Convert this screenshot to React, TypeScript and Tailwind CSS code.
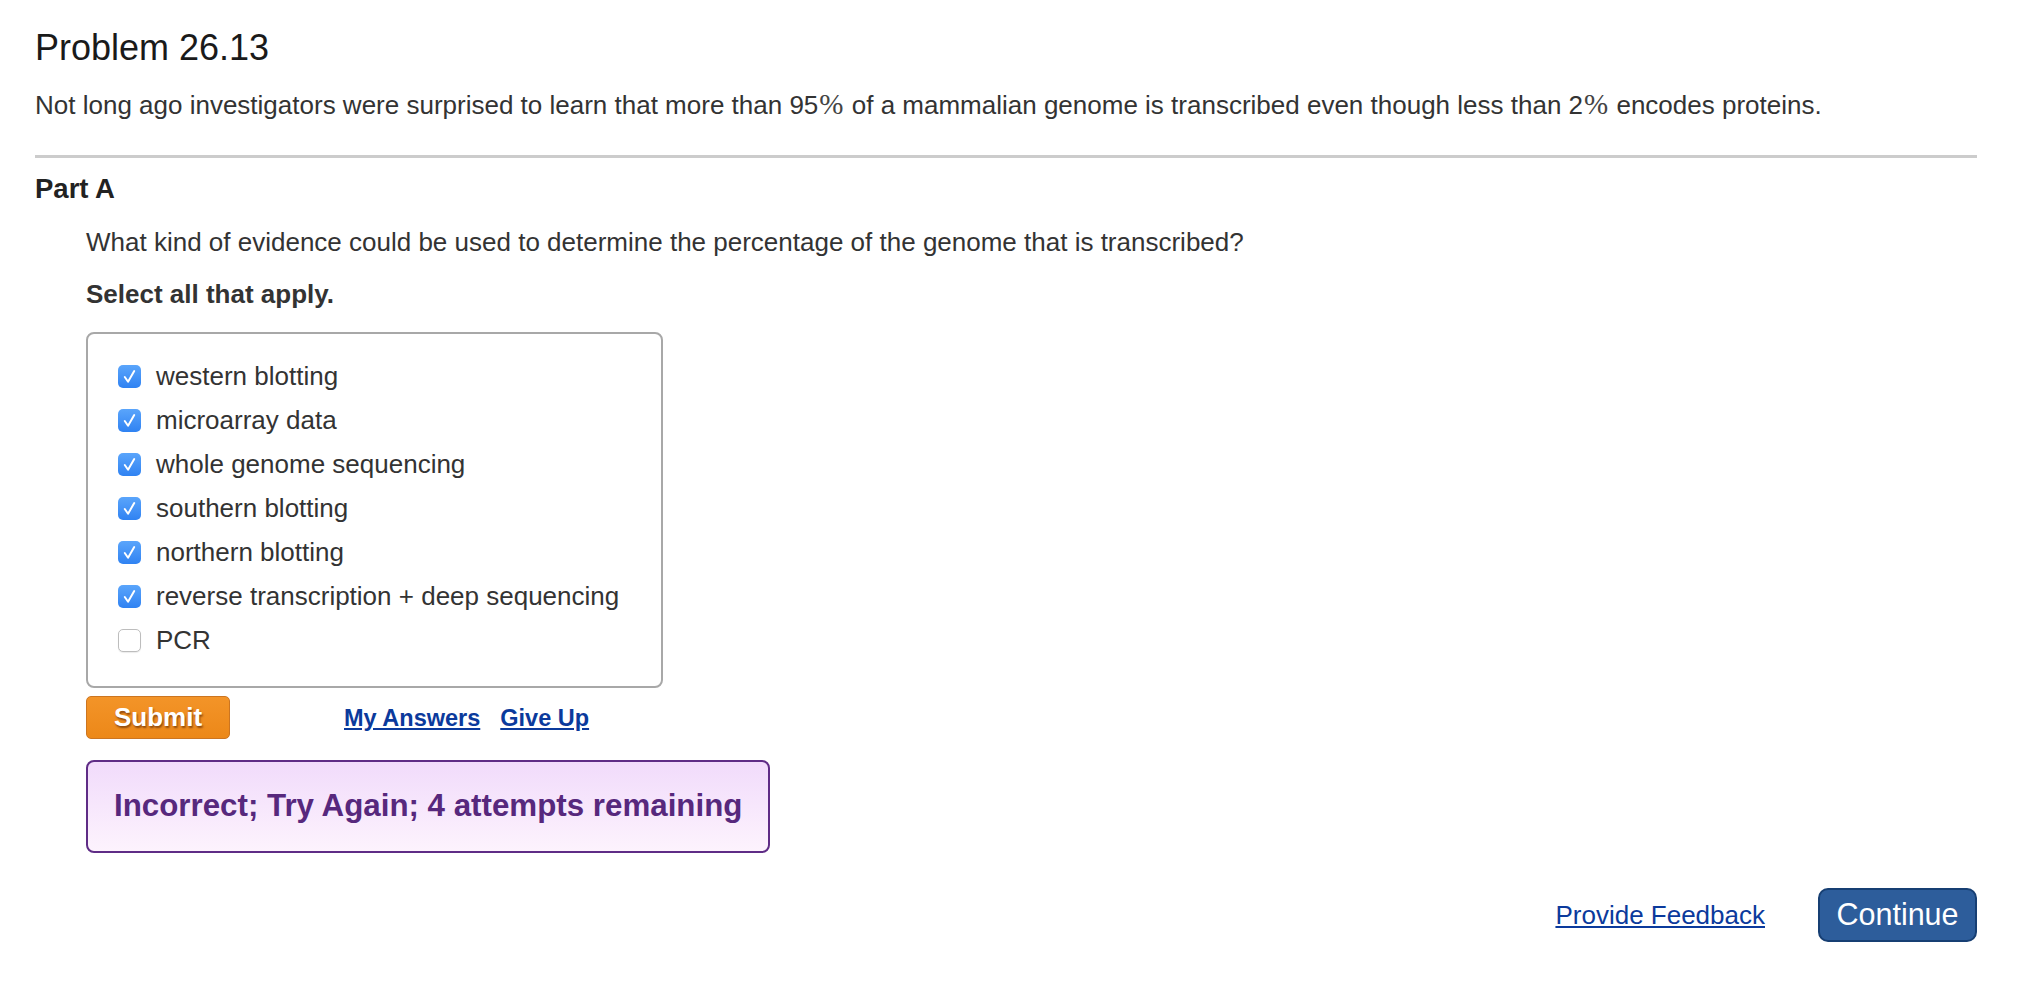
import { useState } from 'react';

const options = [
  { label: 'western blotting', checked: true },
  { label: 'microarray data', checked: true },
  { label: 'whole genome sequencing', checked: true },
  { label: 'southern blotting', checked: true },
  { label: 'northern blotting', checked: true },
  { label: 'reverse transcription + deep sequencing', checked: true },
  { label: 'PCR', checked: false },
];

const Pct = () => (
  <span className="mx-[1px] text-[29px] font-['Liberation_Serif',serif] leading-none text-[#444]">%</span>
);

const Box = ({ checked }: { checked: boolean }) =>
  checked ? (
    <span className="flex h-[23px] w-[23px] items-center justify-center rounded-[5px] bg-gradient-to-b from-[#5aa5fb] to-[#2f82f2]">
      <svg viewBox="0 0 16 16" className="h-[21px] w-[21px]">
        <path d="M4.4 8.4 L6.9 12 L11.6 3.9" fill="none" stroke="#fff" strokeWidth="1.5" strokeLinecap="round" strokeLinejoin="round" />
      </svg>
    </span>
  ) : (
    <span className="h-[23px] w-[23px] rounded-[5px] border border-[#bdbdbd] bg-white shadow-[0_1px_1px_rgba(0,0,0,0.08)]" />
  );

export default function App() {
  const [items, setItems] = useState(options);

  const toggle = (i: number) =>
    setItems(items.map((it, idx) => (idx === i ? { ...it, checked: !it.checked } : it)));

  return (
    <div className="min-h-screen bg-white pl-[35px] pr-[45px] pt-[28px] font-['Liberation_Sans',Arial,sans-serif] text-[#333]">
      <h1 className="text-[36px] leading-[40px] text-[#1a1a1a]">Problem 26.13</h1>
      <p className="mt-[19px] text-[26px] leading-[36px]">
        Not long ago investigators were surprised to learn that more than 95<Pct /> of a mammalian genome is
        transcribed even though less than 2<Pct /> encodes proteins.
      </p>
      <div className="mt-[32px] h-[3px] bg-[#cccccc]" />

      <h2 className="mt-[15px] text-[27.5px] font-bold leading-[32px] text-[#222]">Part A</h2>

      <div className="pl-[51px]">
        <p className="mt-[19px] text-[26px] leading-[36px]">
          What kind of evidence could be used to determine the percentage of the genome that is transcribed?
        </p>
        <p className="mt-[16px] text-[26px] font-bold leading-[36px]">Select all that apply.</p>

        <div className="mt-[20px] w-[577px] rounded-[8px] border-2 border-[#a8a8a8] pb-[24px] pl-[30px] pt-[20px]">
          {items.map((it, i) => (
            <label key={it.label} className="flex h-[44px] cursor-pointer items-center gap-[15px]" onClick={() => toggle(i)}>
              <Box checked={it.checked} />
              <span className="text-[26px] leading-[44px]">{it.label}</span>
            </label>
          ))}
        </div>

        <div className="mt-[8px] flex items-center">
          <button className="h-[43px] w-[144px] rounded-[5px] border border-[#cc7520] bg-gradient-to-b from-[#f39428] to-[#ec8818] text-[26px] font-bold text-white [text-shadow:1px_2px_2px_rgba(80,30,0,0.6)]">
            Submit
          </button>
          <div className="ml-[114px] flex gap-[20px] text-[23.5px] font-bold leading-[28px] text-[#0b3a9c]">
            <a href="#" className="underline">My Answers</a>
            <a href="#" className="underline">Give Up</a>
          </div>
        </div>

        <div className="mt-[21px] flex h-[93px] w-fit items-center rounded-[8px] border-2 border-[#5f2c86] bg-gradient-to-b from-[#f1dbfb] to-[#fdf3fd] px-[26px]">
          <span className="text-[31.3px] font-bold text-[#57287d]">Incorrect; Try Again; 4 attempts remaining</span>
        </div>
      </div>

      <div className="mt-[35px] flex items-center justify-end gap-[53px]">
        <a href="#" className="text-[26px] text-[#0b3a9c] underline">Provide Feedback</a>
        <button className="h-[54px] w-[159px] rounded-[10px] border-2 border-[#173f73] bg-[#2d5d9b] text-[30.5px] text-white">
          Continue
        </button>
      </div>
    </div>
  );
}
